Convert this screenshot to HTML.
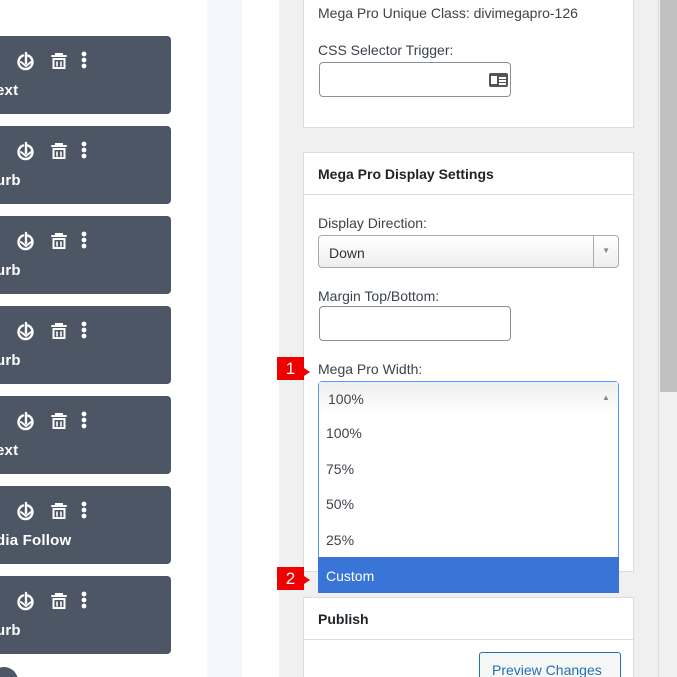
<!DOCTYPE html><html><head><style>
*{box-sizing:border-box;margin:0;padding:0}
html,body{width:677px;height:677px;overflow:hidden}
body{position:relative;background:#fff;font-family:"Liberation Sans",sans-serif}
.card{position:absolute;left:-10px;width:181px;height:78px;background:#4c5665;border-radius:4px;color:#fff}
.card svg{position:absolute;top:14px;left:0}
.card .lb{position:absolute;top:46px;left:6px;font-size:15px;font-weight:bold;letter-spacing:.2px}
.p{position:absolute;left:303px;width:331px;background:#fff;border:1px solid #dcdcde}
.t{position:absolute;font-size:14px;color:#3c434a}
.inp{position:absolute;border:1px solid #8c8f94;border-radius:4px;background:#fff}
.badge{position:absolute;left:277px;width:27px;height:23px;background:#e00;color:#fff;font-size:17px;text-align:center;line-height:23px}
.opt{position:absolute;left:326px;font-size:14px;color:#3c434a}
</style></head><body>
<svg width="0" height="0" style="position:absolute"><defs>
<g id="ic" fill="none" stroke="#fff" stroke-width="2.4" stroke-linecap="round">
<path d="M4 6v8"/>
<path d="M33 5.5a7 7 0 1 0 5 0"/><path d="M36 3v10"/><path d="M31 12l5 4 5-4" stroke-width="2"/>
<path d="M62 6h14M66 6v-2h6v2" stroke-width="2"/><rect x="63.5" y="9" width="11" height="9" stroke-width="2"/><path d="M67 12v4M71 12v4" stroke-width="1.6"/>
<circle cx="94" cy="4" r="1.2" fill="#fff"/><circle cx="94" cy="10" r="1.2" fill="#fff"/><circle cx="94" cy="16" r="1.2" fill="#fff"/>
</g></defs></svg>

<div style="position:absolute;left:207px;top:0;width:35px;height:677px;background:#f3f6fa"></div>
<div style="position:absolute;left:279px;top:0;width:379px;height:677px;background:#f0f0f1"></div>
<div style="position:absolute;left:658px;top:0;width:19px;height:677px;background:#f1f1f1;border-left:1px solid #ddd"></div>
<div style="position:absolute;left:660px;top:0;width:17px;height:392px;background:#c1c1c1"></div>

<div class="card" style="top:36px"><svg width="110" height="22"><use href="#ic"/></svg><div class="lb">ext</div></div>
<div class="card" style="top:126px"><svg width="110" height="22"><use href="#ic"/></svg><div class="lb">urb</div></div>
<div class="card" style="top:216px"><svg width="110" height="22"><use href="#ic"/></svg><div class="lb">urb</div></div>
<div class="card" style="top:306px"><svg width="110" height="22"><use href="#ic"/></svg><div class="lb">urb</div></div>
<div class="card" style="top:396px"><svg width="110" height="22"><use href="#ic"/></svg><div class="lb">ext</div></div>
<div class="card" style="top:486px"><svg width="110" height="22"><use href="#ic"/></svg><div class="lb">dia Follow</div></div>
<div class="card" style="top:576px"><svg width="110" height="22"><use href="#ic"/></svg><div class="lb">urb</div></div>
<div style="position:absolute;left:-10px;top:667px;width:28px;height:28px;border-radius:50%;background:#4c5665"></div>

<div class="p" style="top:-2px;height:130px"></div>
<div class="t" style="left:318px;top:5px">Mega Pro Unique Class: divimegapro-126</div>
<div class="t" style="left:318px;top:42px">CSS Selector Trigger:</div>
<div class="inp" style="left:319px;top:62px;width:192px;height:35px"><div style="position:absolute;right:2px;top:10px;width:19px;height:14px;background:#555;border-radius:2px"><div style="position:absolute;left:2px;top:3px;width:6px;height:8px;background:#fff"></div><div style="position:absolute;left:10px;top:4px;width:7px;height:1.5px;background:#fff;box-shadow:0 3px #fff,0 6px #fff"></div></div></div>

<div class="p" style="top:152px;height:420px"></div>
<div style="position:absolute;left:304px;top:194px;width:329px;height:1px;background:#dcdcde"></div>
<div class="t" style="left:318px;top:166px;font-weight:bold;color:#1d2327">Mega Pro Display Settings</div>
<div class="t" style="left:318px;top:215px">Display Direction:</div>
<div class="inp" style="left:318px;top:235px;width:301px;height:33px;border-color:#aaa;background:linear-gradient(#fff,#eee)"><span style="position:absolute;left:10px;top:9px;font-size:14px;color:#333">Down</span><div style="position:absolute;right:0;top:0;width:25px;height:31px;border-left:1px solid #aaa"></div><span style="position:absolute;right:8px;top:10px;font-size:8px;color:#888">▼</span></div>
<div class="t" style="left:318px;top:288px">Margin Top/Bottom:</div>
<div class="inp" style="left:319px;top:306px;width:192px;height:35px"></div>
<div class="t" style="left:318px;top:361px">Mega Pro Width:</div>
<div style="position:absolute;left:318px;top:381px;width:301px;height:212px;background:#fff;border:1px solid #5897fb;border-radius:4px 4px 0 0"></div>
<div style="position:absolute;left:319px;top:382px;width:299px;height:32px;background:linear-gradient(#eee,#fff)"></div>
<div class="opt" style="left:328px;top:391px;color:#444">100%</div>
<span style="position:absolute;left:602px;top:393px;font-size:8px;color:#888">▲</span>
<div class="opt" style="top:425px">100%</div>
<div class="opt" style="top:461px">75%</div>
<div class="opt" style="top:496px">50%</div>
<div class="opt" style="top:532px">25%</div>
<div style="position:absolute;left:318px;top:557px;width:301px;height:36px;background:#3875d7"></div>
<div class="opt" style="top:568px;color:#fff">Custom</div>
<div class="badge" style="top:357px">1</div>
<div class="badge" style="top:567px">2</div>
<div style="position:absolute;left:304px;top:368px;width:0;height:0;border-left:6px solid #e00;border-top:4px solid transparent;border-bottom:4px solid transparent"></div>
<div style="position:absolute;left:304px;top:576px;width:0;height:0;border-left:6px solid #e00;border-top:4px solid transparent;border-bottom:4px solid transparent"></div>

<div class="p" style="top:597px;height:100px"></div>
<div style="position:absolute;left:304px;top:639px;width:329px;height:1px;background:#dcdcde"></div>
<div class="t" style="left:318px;top:611px;font-weight:bold;color:#1d2327">Publish</div>
<div style="position:absolute;left:479px;top:652px;width:142px;height:40px;border:1px solid #2271b1;border-radius:3px;background:#f6f7f7;color:#2271b1;font-size:14px;padding:9px 0 0 12px">Preview Changes</div>
</body></html>
